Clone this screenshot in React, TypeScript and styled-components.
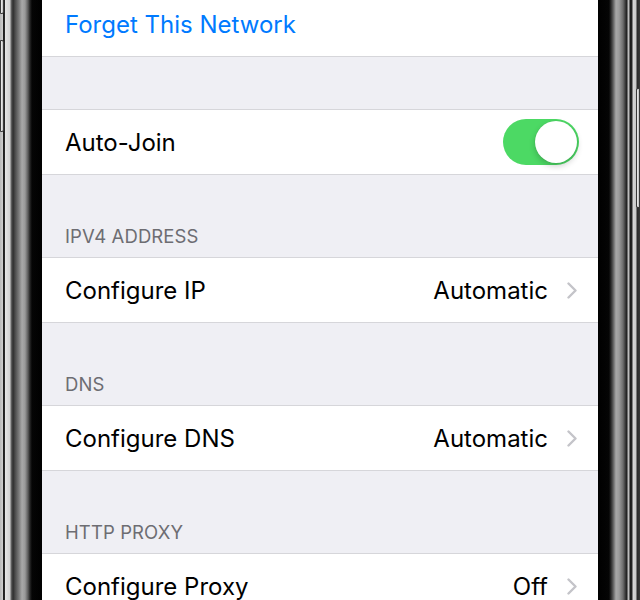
import React from "react";
import styled, { createGlobalStyle } from "styled-components";

const GlobalStyle = createGlobalStyle`
  html, body {
    margin: 0;
    padding: 0;
    background: #000;
  }
  body {
    font-family: Inter, "Noto Sans", "Liberation Sans", sans-serif;
    -webkit-font-smoothing: antialiased;
  }
`;

const Phone = styled.div`
  display: flex;
  width: 640px;
  height: 600px;
  overflow: hidden;
  background: #000;
`;

const Bezel = styled.div<{ $side: "left" | "right" }>`
  position: relative;
  flex: 0 0 42px;
  height: 100%;
  background: ${(p) =>
    p.$side === "left"
      ? `linear-gradient(90deg,
          #b8b8b8 0px, #cfcfcf 3px, #1c1c1c 3px, #2a2a2a 5px,
          #e6e6e6 5px, #d0d0d0 10px, #6b6b6b 11px, #2e2e2e 13px,
          #4a4a4a 15px, #7c7c7c 19px, #a9a9a9 22px, #9a9a9a 25px,
          #5c5c5c 28px, #262626 30px, #050505 32px, #000 42px)`
      : `linear-gradient(90deg,
          #000 0px, #050505 11px, #2b2b2b 13px, #5a5a5a 15px,
          #a8a8a8 18px, #9c9c9c 21px, #6e6e6e 25px, #2c2c2c 28px,
          #1e1e1e 29px, #bdbdbd 30px, #bdbdbd 31px, #1a1a1a 32px,
          #262626 34px, #d8d8d8 35px, #c8c8c8 38px, #2a2a2a 39px, #3a3a3a 42px)`};
`;

/* hardware buttons sitting on the outer edge of the frame */
const SideButton = styled.div<{ $top: number; $height: number; $side: "left" | "right" }>`
  position: absolute;
  top: ${(p) => p.$top}px;
  ${(p) => (p.$side === "left" ? "left: 0;" : "right: 0;")}
  width: 4px;
  height: ${(p) => p.$height}px;
  background: linear-gradient(90deg, #f2f2f2, #bdbdbd);
  border: 1px solid #3a3a3a;
  border-radius: ${(p) => (p.$side === "left" ? "0 2px 2px 0" : "2px 0 0 2px")};
  box-sizing: border-box;
`;

const Screen = styled.div`
  flex: 1;
  height: 100%;
  overflow: hidden;
  background: #efeff4;
`;

/* table view, scrolled a little so the first cell is partly hidden */
const Table = styled.div`
  display: flex;
  flex-direction: column;
  margin-top: -9px;
`;

const Cell = styled.div`
  display: flex;
  align-items: center;
  height: 64px;
  padding: 0 21px 0 23px;
  background: #fff;
  border-top: 1px solid #d6d6da;
  border-bottom: 1px solid #d6d6da;
  font-size: 24px;
  color: #000;
`;

const Label = styled.span<{ $tint?: boolean }>`
  flex: 1;
  color: ${(p) => (p.$tint ? "#007aff" : "#000")};
`;

const Value = styled.span`
  color: #000;
  margin-right: 19px;
`;

const Gap = styled.div<{ $height: number }>`
  display: flex;
  flex-direction: column;
  justify-content: flex-end;
  height: ${(p) => p.$height}px;
  padding: 0 23px 10px;
  box-sizing: border-box;
`;

const Header = styled.span`
  font-size: 18.5px;
  letter-spacing: 0.1px;
  line-height: 22px;
  color: #6d6d72;
  text-transform: uppercase;
`;

const Toggle = styled.div<{ $on: boolean }>`
  display: flex;
  justify-content: ${(p) => (p.$on ? "flex-end" : "flex-start")};
  align-items: center;
  width: 76px;
  height: 46px;
  padding: 2px;
  box-sizing: border-box;
  border-radius: 23px;
  background: ${(p) => (p.$on ? "#4cd964" : "#e5e5ea")};
  margin-right: -2px;
`;

const Knob = styled.div`
  width: 42px;
  height: 42px;
  border-radius: 50%;
  background: #fff;
  box-shadow: 0 3px 6px rgba(0, 0, 0, 0.2), 0 0 0 0.5px rgba(0, 0, 0, 0.06);
`;

const Chevron = () => (
  <svg width="10" height="17" viewBox="0 0 10 17" aria-hidden>
    <path d="M1.5 1.5 L8.5 8.5 L1.5 15.5" fill="none" stroke="#c4c4c9" strokeWidth="2.4" strokeLinecap="round" strokeLinejoin="round" />
  </svg>
);

type Row = { header?: string; label: string; value: string };

const rows: Row[] = [
  { header: "IPv4 Address", label: "Configure IP", value: "Automatic" },
  { header: "DNS", label: "Configure DNS", value: "Automatic" },
  { header: "HTTP Proxy", label: "Configure Proxy", value: "Off" },
];

export default function App() {
  return (
    <>
      <GlobalStyle />
      <Phone>
        <Bezel $side="left">
          <SideButton $side="left" $top={-4} $height={18} />
          <SideButton $side="left" $top={40} $height={92} />
        </Bezel>
        <Screen>
          <Table>
            <Cell>
              <Label $tint>Forget This Network</Label>
            </Cell>
            <Gap $height={52} />
            <Cell>
              <Label>Auto-Join</Label>
              <Toggle $on>
                <Knob />
              </Toggle>
            </Cell>
            {rows.map((r) => (
              <React.Fragment key={r.label}>
                <Gap $height={82}>
                  <Header>{r.header}</Header>
                </Gap>
                <Cell>
                  <Label>{r.label}</Label>
                  <Value>{r.value}</Value>
                  <Chevron />
                </Cell>
              </React.Fragment>
            ))}
          </Table>
        </Screen>
        <Bezel $side="right">
          <SideButton $side="right" $top={88} $height={120} />
        </Bezel>
      </Phone>
    </>
  );
}
